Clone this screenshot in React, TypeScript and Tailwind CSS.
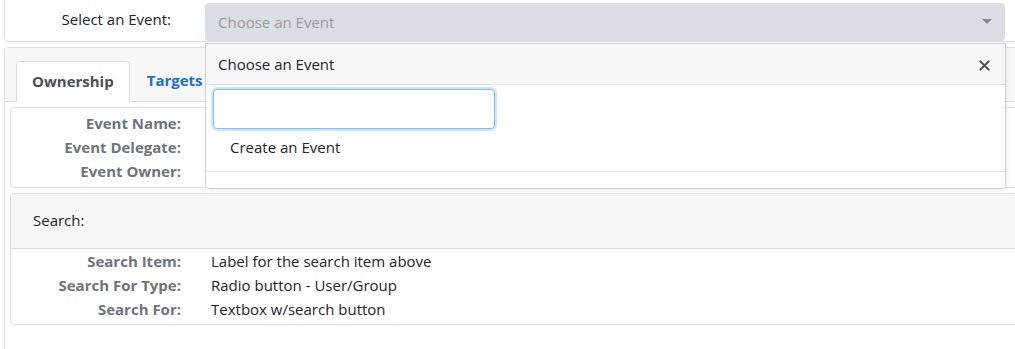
import { X } from "lucide-react";

const FONT = "font-['Open_Sans','Noto_Sans',sans-serif]";

const EVENT_ROWS = ["Event Name:", "Event Delegate:", "Event Owner:"];
const SEARCH_ROWS = [
  ["Search Item:", "Label for the search item above"],
  ["Search For Type:", "Radio button - User/Group"],
  ["Search For:", "Textbox w/search button"],
];

function LabelRow({ label, value }: { label: string; value?: string }) {
  return (
    <div className="flex h-[24px] items-center">
      <div className="w-[170px] shrink-0 text-right font-bold text-[#6c757d]">{label}</div>
      <div className="pl-[30px] text-[#212529]">{value}</div>
    </div>
  );
}

export default function App() {
  return (
    <div
      className={`relative h-[349px] w-[1015px] overflow-hidden bg-white text-[15px] leading-[24px] text-[#212529] ${FONT}`}
    >
      {/* event picker */}
      <div className="-mt-[5px] ml-[4px] flex h-[47px] w-[1100px] items-end rounded border border-[#dfdfdf]">
        <div className="mb-[10px] w-[166px] shrink-0 text-right">Select an Event:</div>
        <div className="ml-[34px] flex h-[38px] w-[800px] items-center justify-between rounded bg-[#dadee4] pb-px pl-[13px] pr-[13px] text-[#9a9a9a]">
          <span>Choose an Event</span>
          <span className="h-0 w-0 border-x-[5px] border-t-[5px] border-x-transparent border-t-[#888]" />
        </div>
      </div>

      {/* tabs card */}
      <div className="ml-[4px] mt-[5px] w-[1100px] rounded border border-[#dfdfdf]">
        <div className="flex h-[54px] items-end border-b border-[#dfdfdf] bg-[#f7f7f7] pl-[11px]">
          <div className="-mb-px flex h-[41px] items-center rounded-t border border-b-0 border-[#dfdfdf] bg-white px-[15px] pb-[2px] font-bold text-[#495057]">
            Ownership
          </div>
          <div className="flex h-[40px] items-center px-[17px] pb-[2px] font-bold text-[#1c6ed6]">Targets</div>
        </div>
        <div className="p-[5px] pb-[40px]">
          <div className="h-[81px] rounded border border-[#dfdfdf] pt-[3px]">
            {EVENT_ROWS.map((label) => (
              <LabelRow key={label} label={label} />
            ))}
          </div>
          <div className="mt-[5px] h-[132px] rounded border border-[#dfdfdf]">
            <div className="flex h-[55px] items-center border-b border-[#dfdfdf] bg-[#f7f7f7] pb-[3px] pl-[22px]">
              Search:
            </div>
            <div>
              {SEARCH_ROWS.map(([label, value]) => (
                <LabelRow key={label} label={label} value={value} />
              ))}
            </div>
          </div>
        </div>
      </div>

      {/* open dropdown */}
      <div className="absolute left-[205px] top-[43px] h-[146px] w-[801px] rounded-b border border-[#d0d0d0] bg-white shadow-[2px_2px_3px_rgba(0,0,0,0.05)]">
        <div className="flex h-[41px] items-center justify-between border-b border-[#e5e5e5] bg-[#f7f7f7] pb-px pl-[12px] pr-[12px]">
          <span>Choose an Event</span>
          <X size={17} strokeWidth={2.6} className="mt-[4px] text-[#555]" />
        </div>
        <div className="pl-[7px] pt-[4px]">
          <div className="h-[40px] w-[282px] rounded border border-[#80bdff] shadow-[0_0_0_2px_rgba(0,123,255,0.2)]" />
        </div>
        <div className="mt-[6px] border-b border-[#e5e5e5] pb-[12px] pl-[24px]">
          <div className="h-[24px] leading-[24px]">Create an Event</div>
        </div>
      </div>
    </div>
  );
}
